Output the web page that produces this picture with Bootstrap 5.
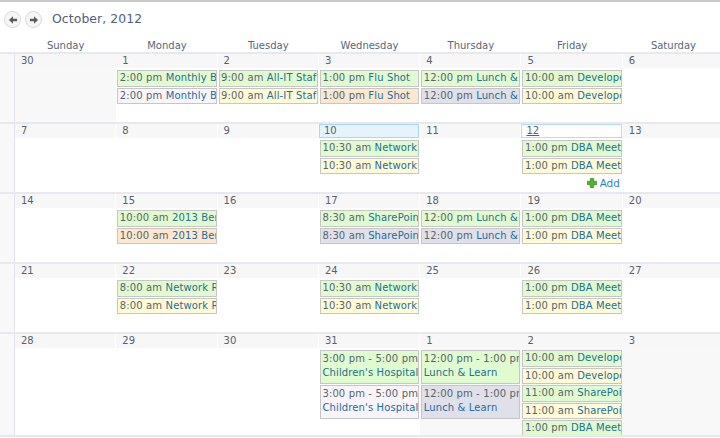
<!DOCTYPE html>
<html lang="en">
<head>
<meta charset="utf-8">
<title>October, 2012</title>
<link href="https://cdn.jsdelivr.net/npm/bootstrap@5.3.0/dist/css/bootstrap.min.css" rel="stylesheet">
<style>
html,body{margin:0;height:438px;overflow:hidden;background:#fff}
body{font-family:"DejaVu Sans",Verdana,sans-serif;font-size:10px;line-height:14px;color:#4c5a6a}
.topline{height:2px;background:#c8c8c8}
.calnav{height:35px;padding-left:4px;gap:4px}
.navbtn{width:17px;height:17px;border:1px solid #d8d8d8;border-radius:50%;background:#f6f6f6;padding:0;display:flex;align-items:center;justify-content:center}
.caltitle{font-size:12.4px;color:#4f5f78;margin-left:6px;margin-bottom:2px;letter-spacing:.1px}
.weekgrid{display:grid;grid-template-columns:15px repeat(7,101.3px);width:724.1px}
.dayname{height:15px;text-align:center;color:#56677a;font-size:10px;line-height:18px}
.week{height:70px;border-top:2px solid #e8e8ee}
.week.lastweek{height:105px;border-bottom:2px solid #e8e8ee}
.gutter{background:#f8f8f8;border-right:1px solid #e2e2ec}
.daycell{min-width:0;overflow:hidden;padding-right:1px}
.daycell.other{background:#f8f8f8}
.datenum{height:14px;margin-bottom:2px;background:#f7f7f7;padding-left:6px;line-height:14px;color:#56626e;font-size:10px}
.datenum.today{background:#e5f3fd;border:1px solid #a8d4f6;padding-left:4px;line-height:12px}
.datenum.selected{background:#fff;border:1px solid #b5daf6;padding-left:4px;line-height:12px;text-decoration:underline}
.evt{margin:1px 0 1px 1px;height:16.6px;border:1px solid #c6c6c6;border-bottom-width:1.5px;padding:0 0 0 1.5px;line-height:13.5px;white-space:nowrap;overflow:hidden;font-size:10px;letter-spacing:.13px;color:#58646e}
.evt+.evt{margin-top:0}
.evt a{color:#256c9c;text-decoration:none}
.evt.two{height:34px;line-height:14px;padding-top:1px;display:flex;flex-direction:column}
.evt.green{background:#e0fbcf}
.evt.green a{color:#22718f}
.evt.yellow{background:#fffbd6}
.evt.orange{background:#fde7cf}
.evt.pale{background:#f8f4fa}
.evt.slate{background:#dfe0ea}
.addrow{color:#2a7fc9;padding-right:2px;line-height:16px;font-size:10.400px;gap:3px;margin-top:1px}
</style>
</head>
<body>
<div class="topline"></div>
<div class="calnav d-flex align-items-center">
  <button class="navbtn" aria-label="Previous"><svg width="10" height="10" viewBox="0 0 11 11"><path d="M1 5.500 5.500 1.500V4H10V7H5.500V9.500Z" fill="#5c5c5c"/></svg></button>
  <button class="navbtn" aria-label="Next"><svg width="10" height="10" viewBox="0 0 11 11"><path d="M10 5.500 5.500 1.500V4H1V7H5.500V9.500Z" fill="#5c5c5c"/></svg></button>
  <span class="caltitle">October, 2012</span>
</div>
<div class="weekgrid">
  <div></div>
  <div class="dayname">Sunday</div><div class="dayname">Monday</div><div class="dayname">Tuesday</div><div class="dayname">Wednesday</div><div class="dayname">Thursday</div><div class="dayname">Friday</div><div class="dayname">Saturday</div>
</div>

<div class="weekgrid week">
  <div class="gutter"></div>
  <div class="daycell other"><div class="datenum">30</div></div>
  <div class="daycell"><div class="datenum">1</div>
    <div class="evt green">2:00 pm <a href="#">Monthly Budget</a></div>
    <div class="evt pale">2:00 pm <a href="#">Monthly Budget</a></div></div>
  <div class="daycell"><div class="datenum">2</div>
    <div class="evt green">9:00 am <a href="#">All-IT Staff</a></div>
    <div class="evt yellow">9:00 am <a href="#">All-IT Staff</a></div></div>
  <div class="daycell"><div class="datenum">3</div>
    <div class="evt green">1:00 pm <a href="#">Flu Shot</a></div>
    <div class="evt orange">1:00 pm <a href="#">Flu Shot</a></div></div>
  <div class="daycell"><div class="datenum">4</div>
    <div class="evt green">12:00 pm <a href="#">Lunch &amp; Learn</a></div>
    <div class="evt slate">12:00 pm <a href="#">Lunch &amp; Learn</a></div></div>
  <div class="daycell"><div class="datenum">5</div>
    <div class="evt green">10:00 am <a href="#">Developer</a></div>
    <div class="evt yellow">10:00 am <a href="#">Developer</a></div></div>
  <div class="daycell"><div class="datenum">6</div></div>
</div>

<div class="weekgrid week">
  <div class="gutter"></div>
  <div class="daycell"><div class="datenum">7</div></div>
  <div class="daycell"><div class="datenum">8</div></div>
  <div class="daycell"><div class="datenum">9</div></div>
  <div class="daycell"><div class="datenum today">10</div>
    <div class="evt green">10:30 am <a href="#">Network</a></div>
    <div class="evt yellow">10:30 am <a href="#">Network</a></div></div>
  <div class="daycell"><div class="datenum">11</div></div>
  <div class="daycell"><div class="datenum selected">12</div>
    <div class="evt green">1:00 pm <a href="#">DBA Meeting</a></div>
    <div class="evt yellow">1:00 pm <a href="#">DBA Meeting</a></div>
    <div class="addrow d-flex justify-content-end align-items-center"><svg width="10" height="10" viewBox="0 0 10 10"><path d="M3.300.5H6.700V3.300H9.500V6.700H6.700V9.500H3.300V6.700H.5V3.300H3.300Z" fill="#4fb52f" stroke="#2f8a1d" stroke-width=".7"/></svg><span>Add</span></div></div>
  <div class="daycell"><div class="datenum">13</div></div>
</div>

<div class="weekgrid week">
  <div class="gutter"></div>
  <div class="daycell"><div class="datenum">14</div></div>
  <div class="daycell"><div class="datenum">15</div>
    <div class="evt green">10:00 am <a href="#">2013 Benefits</a></div>
    <div class="evt orange">10:00 am <a href="#">2013 Benefits</a></div></div>
  <div class="daycell"><div class="datenum">16</div></div>
  <div class="daycell"><div class="datenum">17</div>
    <div class="evt green">8:30 am <a href="#">SharePoint</a></div>
    <div class="evt slate">8:30 am <a href="#">SharePoint</a></div></div>
  <div class="daycell"><div class="datenum">18</div>
    <div class="evt green">12:00 pm <a href="#">Lunch &amp; Learn</a></div>
    <div class="evt slate">12:00 pm <a href="#">Lunch &amp; Learn</a></div></div>
  <div class="daycell"><div class="datenum">19</div>
    <div class="evt green">1:00 pm <a href="#">DBA Meeting</a></div>
    <div class="evt yellow">1:00 pm <a href="#">DBA Meeting</a></div></div>
  <div class="daycell"><div class="datenum">20</div></div>
</div>

<div class="weekgrid week">
  <div class="gutter"></div>
  <div class="daycell"><div class="datenum">21</div></div>
  <div class="daycell"><div class="datenum">22</div>
    <div class="evt green">8:00 am <a href="#">Network Review</a></div>
    <div class="evt yellow">8:00 am <a href="#">Network Review</a></div></div>
  <div class="daycell"><div class="datenum">23</div></div>
  <div class="daycell"><div class="datenum">24</div>
    <div class="evt green">10:30 am <a href="#">Network</a></div>
    <div class="evt yellow">10:30 am <a href="#">Network</a></div></div>
  <div class="daycell"><div class="datenum">25</div></div>
  <div class="daycell"><div class="datenum">26</div>
    <div class="evt green">1:00 pm <a href="#">DBA Meeting</a></div>
    <div class="evt yellow">1:00 pm <a href="#">DBA Meeting</a></div></div>
  <div class="daycell"><div class="datenum">27</div></div>
</div>

<div class="weekgrid week lastweek">
  <div class="gutter"></div>
  <div class="daycell"><div class="datenum">28</div></div>
  <div class="daycell"><div class="datenum">29</div></div>
  <div class="daycell"><div class="datenum">30</div></div>
  <div class="daycell"><div class="datenum">31</div>
    <div class="evt two green"><span>3:00 pm - 5:00 pm</span><a href="#">Children's Hospital</a></div>
    <div class="evt two pale"><span>3:00 pm - 5:00 pm</span><a href="#">Children's Hospital</a></div></div>
  <div class="daycell other"><div class="datenum">1</div>
    <div class="evt two green"><span>12:00 pm - 1:00 pm</span><a href="#">Lunch &amp; Learn</a></div>
    <div class="evt two slate"><span>12:00 pm - 1:00 pm</span><a href="#">Lunch &amp; Learn</a></div></div>
  <div class="daycell other"><div class="datenum">2</div>
    <div class="evt green">10:00 am <a href="#">Developer</a></div>
    <div class="evt yellow">10:00 am <a href="#">Developer</a></div>
    <div class="evt green">11:00 am <a href="#">SharePoint</a></div>
    <div class="evt yellow">11:00 am <a href="#">SharePoint</a></div>
    <div class="evt green">1:00 pm <a href="#">DBA Meeting</a></div></div>
  <div class="daycell other"><div class="datenum">3</div></div>
</div>
<script src="https://cdn.jsdelivr.net/npm/bootstrap@5.3.0/dist/js/bootstrap.bundle.min.js"></script>
</body>
</html>
